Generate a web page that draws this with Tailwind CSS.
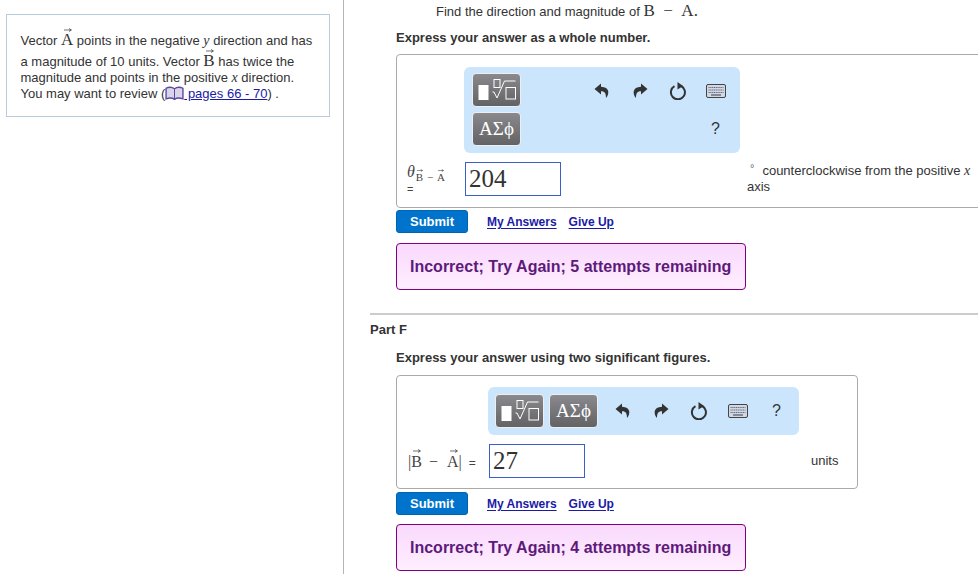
<!DOCTYPE html>
<html>
<head>
<meta charset="utf-8">
<script src="https://cdn.jsdelivr.net/npm/@tailwindcss/browser@4"></script>
</head>
<body class="bg-white overflow-hidden font-['Liberation_Sans',sans-serif] text-[#333] text-[13px]">
<svg class="hidden">
  <symbol id="vec" viewBox="0 0 8 4"><path d="M0 2h7M5 .5 7.500 2 5 3.500" fill="none" stroke="#333" stroke-width=".7"/></symbol>
  <symbol id="undo" viewBox="0 0 16 16"><path d="M7 .5 .5 6 7 11.500V8.200C10.500 8 12 10 12 15 15.500 11 16 4 7 3.700Z" fill="#333"/></symbol>
  <symbol id="redo" viewBox="0 0 16 16"><path d="M9 .5 15.500 6 9 11.500V8.200C5.500 8 4 10 4 15 .5 11 0 4 9 3.700Z" fill="#333"/></symbol>
  <symbol id="reset" viewBox="0 0 18 18"><path d="M5.500 4.200A7 7 0 1 0 11.500 3.800" fill="none" stroke="#333" stroke-width="2"/><path d="M13.500 0 8 4 13.500 7.500Z" fill="#333" transform="matrix(-1 0 0 1 22 0)"/></symbol>
  <symbol id="kbd" viewBox="0 0 20 14"><rect x=".5" y=".5" width="19" height="13" rx="1.500" fill="#cfd8e3" stroke="#444"/><path d="M2.500 3.500h15M2.500 6h15M2.500 8.500h15" stroke="#667" stroke-dasharray="1.200 .6"/><path d="M5 11h10" stroke="#556" stroke-width="1.200"/></symbol>
  <symbol id="tmpl" viewBox="0 0 40 28"><rect x="1.500" y="9" width="10" height="15" fill="#fff"/><rect x="17" y="3.500" width="6" height="8" fill="none" stroke="#fff"/><path d="M15.500 16h1.500l3 6 7.500-17H38.500" fill="none" stroke="#fff"/><rect x="29" y="11.500" width="9.500" height="11.500" fill="none" stroke="#fff"/></symbol>
</svg>

<div class="flex h-[574px] w-[978px]">
  <!-- Left column -->
  <aside class="w-[344px] shrink-0 border-r border-[#b5b5b5] pl-[6px] pt-[14px]">
    <div class="w-[324px] h-[103px] border border-[#b5cbe0] pl-[13.500px] pt-[13px] leading-[16px]">
      <p class="h-[23px] pt-[3px] whitespace-nowrap">Vector <span class="relative inline-block font-['Liberation_Serif',serif] text-[17px] leading-none">A<svg class="absolute left-[3px] -top-[3px] w-[8px] h-[4px]"><use href="#vec"/></svg></span> points in the negative <i class="font-['Liberation_Serif',serif] text-[14px]">y</i> direction and has</p>
      <p class="mt-[1px] whitespace-nowrap">a magnitude of 10 units. Vector <span class="relative inline-block font-['Liberation_Serif',serif] text-[17px] leading-none">B<svg class="absolute left-[3px] -top-[3px] w-[8px] h-[4px]"><use href="#vec"/></svg></span> has twice the</p>
      <p class="whitespace-nowrap">magnitude and points in the positive <i class="font-['Liberation_Serif',serif] text-[14px]">x</i> direction.</p>
      <p class="whitespace-nowrap">You may want to review (<svg class="inline-block w-[19px] h-[14px] align-[-2px]" viewBox="0 0 18 13"><path d="M1 2c3-1.500 6-1 8 .5 2-1.500 5-2 8-.5v10c-3-1-6-1-8 .5-2-1.500-5-1.500-8-.5Z" fill="#d9d4ec" stroke="#5b4a9a" stroke-width="1.300"/><path d="M9 2.500v10" stroke="#5b4a9a"/></svg><a class="text-[#1a1aa6] underline"> pages 66 - 70</a>) .</p>
    </div>
  </aside>

  <!-- Right column -->
  <main class="flex-1 min-w-0 pl-[26px] overflow-hidden">
    <div class="pl-[26px]">
      <p class="pl-[40px] h-[24px] pt-[3px] leading-[16px] whitespace-nowrap">Find the direction and magnitude of <span class="font-['Liberation_Serif',serif] text-[17px]">B &nbsp;− &nbsp;A.</span></p>
      <p class="h-[30px] pt-[6px] font-bold leading-[16px]">Express your answer as a whole number.</p>

      <!-- Answer box E -->
      <div class="w-[640px] h-[154px] border border-[#aaa] rounded-[4px] flex flex-col">
        <div class="ml-[67px] mt-[12px] w-[276px] h-[86px] bg-[#cbe5fd] rounded-[6px] pl-[8px] pr-[14px] py-[6px] flex justify-between">
          <div class="flex flex-col gap-[5px]">
            <div class="w-[49px] h-[34px] rounded-[4px] border border-[#eee] bg-gradient-to-b from-[#8a8a8e] to-[#636366] flex items-center justify-center">
              <svg class="w-[40px] h-[28px]"><use href="#tmpl"/></svg>
            </div>
            <div class="w-[49px] h-[34px] rounded-[4px] border border-[#eee] bg-gradient-to-b from-[#8a8a8e] to-[#636366] flex items-center justify-center text-white text-[19px] font-['Liberation_Serif',serif]">ΑΣϕ</div>
          </div>
          <div class="w-[132px] pt-[8px] flex flex-col">
            <div class="flex items-center h-[20px]">
              <svg class="w-[16px] h-[16px]"><use href="#undo"/></svg>
              <svg class="w-[16px] h-[16px] ml-[22px]"><use href="#redo"/></svg>
              <svg class="w-[18px] h-[18px] ml-[21px]"><use href="#reset"/></svg>
              <svg class="w-[20px] h-[14px] ml-[19px]"><use href="#kbd"/></svg>
            </div>
            <div class="mt-[19px] pr-[6px] text-right text-[16px] leading-[18px]">?</div>
          </div>
        </div>
        <div class="flex mt-[9px] h-[34px]">
          <div class="w-[68px] pl-[10px] font-['Liberation_Serif',serif] text-[#444] pt-[2px] leading-none">
            <div class="flex items-start h-[20px]">
              <i class="text-[16px]">θ</i>
              <span class="relative top-[8px] text-[11px] tracking-[0.5px] whitespace-nowrap ml-px">
                <span class="relative inline-block">B<svg class="absolute left-[1px] -top-[3px] w-[6px] h-[3px]"><use href="#vec"/></svg></span> − <span class="relative inline-block">A<svg class="absolute left-[1px] -top-[3px] w-[6px] h-[3px]"><use href="#vec"/></svg></span>
              </span>
            </div>
            <div class="text-[11px] font-['Liberation_Sans',sans-serif]">=</div>
          </div>
          <div class="w-[96px] h-[34px] border border-[#3a5fcd] pl-[3px] font-['Liberation_Serif',serif] text-[25px] leading-[31px]">204</div>
          <div class="ml-[186px] -mt-[2px] leading-[16px] whitespace-nowrap">
            <p><span class="text-[11px] text-[#666] align-[3px] mr-[8px] pl-[3px]">°</span>counterclockwise from the positive <i class="font-['Liberation_Serif',serif] text-[14px]">x</i></p>
            <p>axis</p>
          </div>
        </div>
      </div>

      <div class="flex items-center mt-[2px] h-[23px]">
        <button class="w-[72px] h-[23px] pt-px bg-[#0074cc] border border-[#0065b0] rounded-[3px] text-white font-bold">Submit</button>
        <a class="ml-[19px] text-[#1a1aa6] font-bold text-[12px] underline underline-offset-2">My Answers</a>
        <a class="ml-[12px] text-[#1a1aa6] font-bold text-[12px] underline underline-offset-2">Give Up</a>
      </div>
      <div class="mt-[10px] w-[350px] h-[47px] border border-[#800080] rounded-[4px] bg-gradient-to-b from-[#f9d9fd] to-[#ffeeff] flex items-center pl-[13px] text-[#5d1a7a] font-bold text-[16px]">Incorrect; Try Again; 5 attempts remaining</div>
    </div>

    <div class="mt-[23px] border-t-2 border-[#ccc] pt-[7px]">
      <h3 class="font-bold text-[13px] leading-[16px]">Part F</h3>
      <div class="pl-[26px]">
        <p class="mt-[12px] h-[25px] font-bold leading-[16px]">Express your answer using two significant figures.</p>

        <!-- Answer box F -->
        <div class="w-[462px] h-[114px] border border-[#aaa] rounded-[4px] flex flex-col">
          <div class="ml-[91px] mt-[11px] w-[311px] h-[48px] bg-[#cbe5fd] rounded-[6px] px-[7px] flex items-center">
            <div class="w-[49px] h-[34px] rounded-[4px] border border-[#eee] bg-gradient-to-b from-[#8a8a8e] to-[#636366] flex items-center justify-center">
              <svg class="w-[40px] h-[28px]"><use href="#tmpl"/></svg>
            </div>
            <div class="ml-[5px] w-[49px] h-[34px] rounded-[4px] border border-[#eee] bg-gradient-to-b from-[#8a8a8e] to-[#636366] flex items-center justify-center text-white text-[19px] font-['Liberation_Serif',serif]">ΑΣϕ</div>
            <svg class="ml-[17px] w-[16px] h-[16px]"><use href="#undo"/></svg>
            <svg class="ml-[22px] w-[16px] h-[16px]"><use href="#redo"/></svg>
            <svg class="ml-[21px] w-[18px] h-[18px]"><use href="#reset"/></svg>
            <svg class="ml-[20px] w-[20px] h-[14px]"><use href="#kbd"/></svg>
            <span class="ml-[24px] text-[16px] leading-[18px]">?</span>
          </div>
          <div class="flex items-center mt-[9px] h-[34px]">
            <div class="w-[92px] pl-[11px] pt-[2px] font-['Liberation_Serif',serif] text-[16px] whitespace-nowrap text-[#444]">
              |<span class="relative inline-block">B<svg class="absolute left-[2px] -top-[1px] w-[8px] h-[4px]"><use href="#vec"/></svg></span> <span class="mx-[3px]">−</span> <span class="relative inline-block ml-[2px]">A<svg class="absolute left-[3px] -top-[1px] w-[8px] h-[4px]"><use href="#vec"/></svg></span>| <span class="ml-[3px] font-['Liberation_Sans',sans-serif] text-[12px]">=</span>
            </div>
            <div class="w-[96px] h-[34px] border border-[#3a5fcd] pl-[3px] font-['Liberation_Serif',serif] text-[25px] leading-[31px]">27</div>
            <span class="ml-[226px] whitespace-nowrap">units</span>
          </div>
        </div>

        <div class="flex items-center mt-[3px] h-[23px]">
          <button class="w-[72px] h-[23px] pt-px bg-[#0074cc] border border-[#0065b0] rounded-[3px] text-white font-bold">Submit</button>
          <a class="ml-[19px] text-[#1a1aa6] font-bold text-[12px] underline underline-offset-2">My Answers</a>
          <a class="ml-[12px] text-[#1a1aa6] font-bold text-[12px] underline underline-offset-2">Give Up</a>
        </div>
        <div class="mt-[9px] w-[350px] h-[47px] border border-[#800080] rounded-[4px] bg-gradient-to-b from-[#f9d9fd] to-[#ffeeff] flex items-center pl-[13px] text-[#5d1a7a] font-bold text-[16px]">Incorrect; Try Again; 4 attempts remaining</div>
      </div>
    </div>
  </main>
</div>
</body>
</html>
